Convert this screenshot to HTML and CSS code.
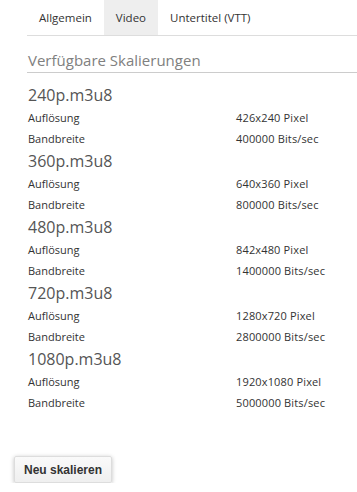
FILE: index.html
```html
<!DOCTYPE html>
<html lang="de">
<head>
<meta charset="utf-8">
<link rel="stylesheet" href="styles.css">
</head>
<body>
<div class="page">
  <nav class="tabs">
    <a class="tab">Allgemein</a>
    <a class="tab active">Video</a>
    <a class="tab">Untertitel (VTT)</a>
  </nav>
  <h2 class="legend">Verfügbare Skalierungen</h2>
  <section class="variant">
    <h3 class="variant-title">240p.m3u8</h3>
    <div class="row"><span class="label">Auflösung</span><span class="value">426x240 Pixel</span></div>
    <div class="row"><span class="label">Bandbreite</span><span class="value">400000 Bits/sec</span></div>
  </section>
  <section class="variant">
    <h3 class="variant-title">360p.m3u8</h3>
    <div class="row"><span class="label">Auflösung</span><span class="value">640x360 Pixel</span></div>
    <div class="row"><span class="label">Bandbreite</span><span class="value">800000 Bits/sec</span></div>
  </section>
  <section class="variant">
    <h3 class="variant-title">480p.m3u8</h3>
    <div class="row"><span class="label">Auflösung</span><span class="value">842x480 Pixel</span></div>
    <div class="row"><span class="label">Bandbreite</span><span class="value">1400000 Bits/sec</span></div>
  </section>
  <section class="variant">
    <h3 class="variant-title">720p.m3u8</h3>
    <div class="row"><span class="label">Auflösung</span><span class="value">1280x720 Pixel</span></div>
    <div class="row"><span class="label">Bandbreite</span><span class="value">2800000 Bits/sec</span></div>
  </section>
  <section class="variant">
    <h3 class="variant-title">1080p.m3u8</h3>
    <div class="row"><span class="label">Auflösung</span><span class="value">1920x1080 Pixel</span></div>
    <div class="row"><span class="label">Bandbreite</span><span class="value">5000000 Bits/sec</span></div>
  </section>
  <div class="actions">
    <button class="btn">Neu skalieren</button>
  </div>
</div>
</body>
</html>
```
FILE: styles.css
```css
html, body {
  margin: 0;
  padding: 0;
  background: #fff;
}
body {
  font-family: "Open Sans", "Noto Sans", sans-serif;
  color: #333;
  font-size: 11px;
}
.page {
  padding-left: 27px;
}
.tabs {
  display: flex;
  border-bottom: 1px solid #ddd;
  height: 36px;
  box-sizing: border-box;
}
.tab {
  display: block;
  padding: 0 12px;
  line-height: 35px;
  font-size: 11.5px;
  color: #333;
}
.active {
  background: #eee;
}
.legend {
  margin: 0;
  padding: 13px 0 1px 1px;
  font-size: 15px;
  font-weight: normal;
  color: #808080;
  line-height: 22px;
  border-bottom: 1px solid #ccc;
}
.legend + .variant {
  margin-top: 10px;
}
.variant-title {
  margin: 0;
  padding-left: 1px;
  font-size: 16px;
  font-weight: normal;
  line-height: 24px;
  color: #555;
}
.row {
  display: flex;
  line-height: 21px;
  padding-left: 1px;
  color: #333;
}
.label {
  width: 208px;
}
.value {
  letter-spacing: 0.15px;
}
.actions {
  margin-top: 43px;
  margin-left: -13px;
}
.btn {
  font-family: "Liberation Sans", Arial, sans-serif;
  font-weight: bold;
  font-size: 12px;
  color: #333;
  background: linear-gradient(#fafafa, #efefef);
  border: 1px solid #ddd;
  border-radius: 2px;
  box-shadow: 0 1px 4px rgba(0,0,0,0.25);
  padding: 0 9px;
  height: 27px;
}
```
